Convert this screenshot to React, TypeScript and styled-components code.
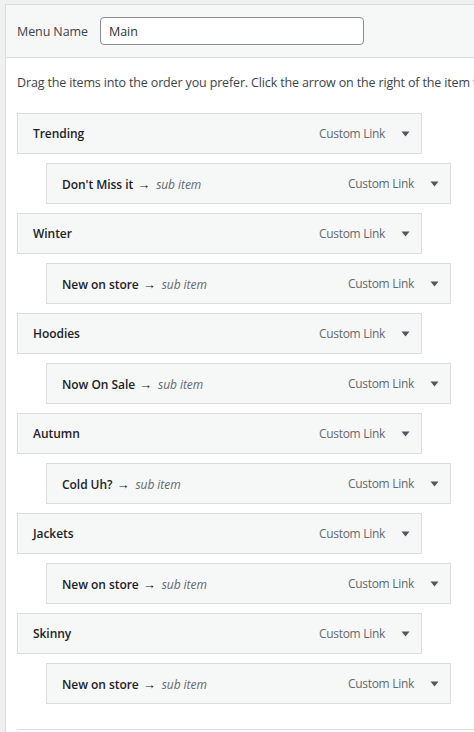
import React from 'react'
import styled, { createGlobalStyle } from 'styled-components'

interface MenuItem {
  title: string;
  sub?: boolean;
}

const items: MenuItem[] = [
  { title: 'Trending' },
  { title: "Don't Miss it", sub: true },
  { title: 'Winter' },
  { title: 'New on store', sub: true },
  { title: 'Hoodies' },
  { title: 'Now On Sale', sub: true },
  { title: 'Autumn' },
  { title: 'Cold Uh?', sub: true },
  { title: 'Jackets' },
  { title: 'New on store', sub: true },
  { title: 'Skinny' },
  { title: 'New on store', sub: true },
]

const GlobalStyle = createGlobalStyle`
  html, body {
    margin: 0;
    padding: 0;
    background: #f0f0f1;
    overflow: hidden;
  }
  body {
    font-family: "Open Sans", "Noto Sans", sans-serif;
    font-size: 12px;
    color: #3c434a;
  }
`

const Page = styled.div`
  padding: 4px 0 0 5px;
  overflow: hidden;
`

const Panel = styled.div`
  width: 500px;
  background: #fff;
  border: 1px solid #dcdcde;
  border-right: none;
`

const Header = styled.div`
  display: flex;
  align-items: center;
  gap: 12px;
  height: 52px;
  padding: 0 11px;
  background: #f6f7f7;
  border-bottom: 1px solid #dcdcde;
`

const Label = styled.label`
  font-size: 12.5px;
  color: #3c434a;
  letter-spacing: -0.1px;
`

const NameInput = styled.input`
  box-sizing: border-box;
  width: 264px;
  height: 28px;
  padding: 0 8px;
  border: 1px solid #8c8f94;
  border-radius: 4px;
  background: #fff;
  font-family: inherit;
  font-size: 12.5px;
  color: #2c3338;
  outline: none;
`

const Body = styled.div`
  padding: 0 0 0 11px;
`

const Hint = styled.p`
  margin: 16px 0 22px;
  white-space: nowrap;
  font-size: 12.5px;
  letter-spacing: -0.15px;
  color: #3c434a;
`

const List = styled.ul`
  list-style: none;
  margin: 0;
  padding: 0;
`

const Row = styled.li<{ $sub?: boolean }>`
  box-sizing: border-box;
  display: flex;
  align-items: center;
  width: 405px;
  height: 41px;
  margin: 0 0 9px ${p => (p.$sub ? '29px' : '0')};
  padding: 0 8px 0 15px;
  background: #f6f7f7;
  border: 1px solid #dcdcde;
`

const Title = styled.span`
  flex: 1;
  font-weight: 600;
  font-size: 12px;
  color: #1d2327;
  letter-spacing: -0.05px;
`

const Dash = styled.span`
  margin-left: 4px;
  font-size: 13px;
  font-weight: 700;
`

const SubLabel = styled.span`
  margin-left: 6px;
  font-style: italic;
  font-weight: 400;
  color: #646970;
`

const Type = styled.span`
  font-size: 12px;
  color: #646970;
  letter-spacing: -0.3px;
`

const Toggle = styled.span`
  display: flex;
  align-items: center;
  justify-content: center;
  width: 16px;
  margin-left: 12px;
`

const Footer = styled.div`
  height: 20px;
  margin-top: 25px;
  border-top: 1px solid #dcdcde;
`

const Arrow = () => (
  <svg width="9" height="6" viewBox="0 0 9 6">
    <path d="M0.5 0.5 L8.5 0.5 L4.5 5.5 Z" fill="#50575e" />
  </svg>
)

export default function App() {
  return (
    <>
      <GlobalStyle />
      <Page>
        <Panel>
          <Header>
            <Label>Menu Name</Label>
            <NameInput defaultValue="Main" />
          </Header>
          <Body>
            <Hint>Drag the items into the order you prefer. Click the arrow on the right of the item to reveal additional configuration options.</Hint>
            <List>
              {items.map((item, i) => (
                <Row key={i} $sub={item.sub}>
                  <Title>
                    {item.title}
                    {item.sub && <Dash>{'\u2192'}</Dash>}
                    {item.sub && <SubLabel>sub item</SubLabel>}
                  </Title>
                  <Type>Custom Link</Type>
                  <Toggle>
                    <Arrow />
                  </Toggle>
                </Row>
              ))}
            </List>
            <Footer />
          </Body>
        </Panel>
      </Page>
    </>
  )
}
